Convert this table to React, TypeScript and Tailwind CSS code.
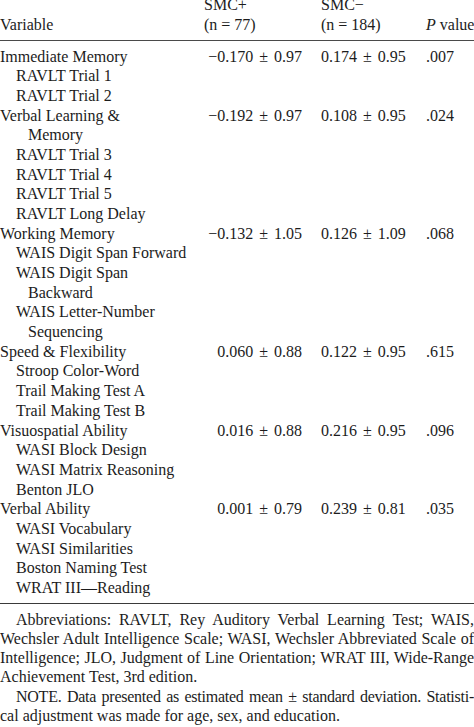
type Group = {
  name: string[];
  plus: string;
  minus: string;
  p: string;
  items: string[][];
};

const groups: Group[] = [
  {
    name: ["Immediate Memory"],
    plus: "−0.170 ± 0.97",
    minus: "0.174 ± 0.95",
    p: ".007",
    items: [["RAVLT Trial 1"], ["RAVLT Trial 2"]],
  },
  {
    name: ["Verbal Learning &", "Memory"],
    plus: "−0.192 ± 0.97",
    minus: "0.108 ± 0.95",
    p: ".024",
    items: [["RAVLT Trial 3"], ["RAVLT Trial 4"], ["RAVLT Trial 5"], ["RAVLT Long Delay"]],
  },
  {
    name: ["Working Memory"],
    plus: "−0.132 ± 1.05",
    minus: "0.126 ± 1.09",
    p: ".068",
    items: [
      ["WAIS Digit Span Forward"],
      ["WAIS Digit Span", "Backward"],
      ["WAIS Letter-Number", "Sequencing"],
    ],
  },
  {
    name: ["Speed & Flexibility"],
    plus: "0.060 ± 0.88",
    minus: "0.122 ± 0.95",
    p: ".615",
    items: [["Stroop Color-Word"], ["Trail Making Test A"], ["Trail Making Test B"]],
  },
  {
    name: ["Visuospatial Ability"],
    plus: "0.016 ± 0.88",
    minus: "0.216 ± 0.95",
    p: ".096",
    items: [["WASI Block Design"], ["WASI Matrix Reasoning"], ["Benton JLO"]],
  },
  {
    name: ["Verbal Ability"],
    plus: "0.001 ± 0.79",
    minus: "0.239 ± 0.81",
    p: ".035",
    items: [["WASI Vocabulary"], ["WASI Similarities"], ["Boston Naming Test"], ["WRAT III—Reading"]],
  },
];

function Line({
  label,
  indent,
  plus = "",
  minus = "",
  p = "",
}: {
  label: string;
  indent: 0 | 1 | 2;
  plus?: string;
  minus?: string;
  p?: string;
}) {
  const pad = indent === 0 ? "pl-0" : indent === 1 ? "pl-[16px]" : "pl-[28px]";
  return (
    <div className="grid grid-cols-[204px_98px_124px_1fr] whitespace-nowrap">
      <div className={pad}>{label}</div>
      <div className="text-right [word-spacing:2px]">{plus}</div>
      <div className="pl-[19px] [word-spacing:2px]">{minus}</div>
      <div>{p}</div>
    </div>
  );
}

export default function App() {
  return (
    <div className="w-[474px] h-[727px] overflow-hidden bg-white text-[#1c1c1c] font-['Liberation_Serif','Times_New_Roman',serif] text-[16px] leading-[19.67px]">
      <div className="mt-[-5px]">
        {/* header */}
        <div className="pb-[6px] border-b border-[#4a4a4a] whitespace-nowrap">
          <div className="grid grid-cols-[204px_98px_124px_1fr]">
            <div />
            <div>SMC+</div>
            <div className="pl-[19px]">SMC−</div>
            <div />
          </div>
          <div className="grid grid-cols-[204px_98px_124px_1fr]">
            <div>Variable</div>
            <div>(n = 77)</div>
            <div className="pl-[19px]">(n = 184)</div>
            <div>
              <span className="italic">P</span> value
            </div>
          </div>
        </div>

        {/* body */}
        <div className="pt-[5.4px] pb-[5px] border-b-[1.5px] border-[#3a3a3a]">
          {groups.map((g) => (
            <div key={g.name[0]}>
              {g.name.map((n, i) =>
                i === 0 ? (
                  <Line key={n} label={n} indent={0} plus={g.plus} minus={g.minus} p={g.p} />
                ) : (
                  <Line key={n} label={n} indent={2} />
                )
              )}
              {g.items.map((item) =>
                item.map((n, i) => <Line key={n} label={n} indent={i === 0 ? 1 : 2} />)
              )}
            </div>
          ))}
        </div>

        {/* footnote */}
        <div className="pt-[6px] leading-[19.3px]">
          <div className="pl-[16px] text-justify [text-align-last:justify]">
            Abbreviations: RAVLT, Rey Auditory Verbal Learning Test; WAIS,
          </div>
          <div className="text-justify [text-align-last:justify]">
            Wechsler Adult Intelligence Scale; WASI, Wechsler Abbreviated Scale of
          </div>
          <div className="text-justify [text-align-last:justify]">
            Intelligence; JLO, Judgment of Line Orientation; WRAT III, Wide-Range
          </div>
          <div>Achievement Test, 3rd edition.</div>
          <div className="pl-[16px] text-justify [text-align-last:justify] tracking-[-0.25px] [word-spacing:-1px]">
            NOTE. Data presented as estimated mean ± standard deviation. Statisti-
          </div>
          <div>cal adjustment was made for age, sex, and education.</div>
        </div>
      </div>
    </div>
  );
}
